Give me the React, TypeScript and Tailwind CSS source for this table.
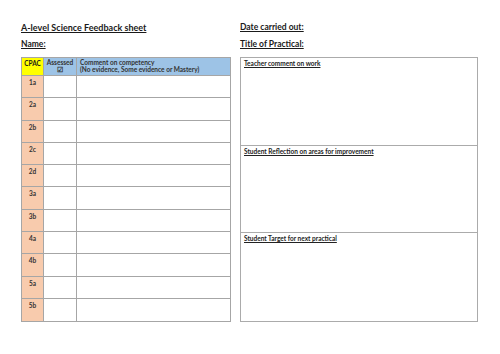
import React from "react"

const rows = ["1a", "2a", "2b", "2c", "2d", "3a", "3b", "4a", "4b", "5a", "5b"]

const sections = [
  "Teacher comment on work",
  "Student Reflection on areas for improvement",
  "Student Target for next practical",
]

export default function App() {
  return (
    <div
      className="w-[500px] h-[354px] bg-white text-[#1a1a1a] flex gap-[9px] pl-[21px] pt-[21px] leading-none"
      style={{ fontFamily: "Lato, 'Liberation Sans', sans-serif" }}
    >
      {/* left: competency table */}
      <div className="w-[210px] flex flex-col">
        <div className="h-[12px] flex items-center text-[9px] font-bold underline">
          A-level Science Feedback sheet
        </div>
        <div className="h-[12px] mt-[5px] flex items-center text-[8.5px] font-bold underline">
          Name:
        </div>
        <div className="mt-[7px] border border-[#a6a6a6]">
          <div className="flex h-[18px] border-b border-[#a6a6a6] text-[6.5px] font-bold leading-[7px]">
            <div className="w-[22px] bg-[#ffff00] border-r border-[#a6a6a6] flex justify-center pt-[2px]">CPAC</div>
            <div className="w-[33px] bg-[#9dc3e6] border-r border-[#a6a6a6] flex flex-col items-center pt-[1px] text-[#333]">
              <span>Assessed</span>
              <span className="text-[7px]">☑</span>
            </div>
            <div className="flex-1 bg-[#9dc3e6] flex flex-col pl-[3px] pt-[1px] text-[#333]">
              <span>Comment on competency</span>
              <span>(No evidence, Some evidence or Mastery)</span>
            </div>
          </div>
          {rows.map((r, i) => (
            <div
              key={r}
              className={`flex h-[22.3px] ${i < rows.length - 1 ? "border-b border-[#a6a6a6]" : ""}`}
            >
              <div className="w-[22px] bg-[#f8cbad] border-r border-[#a6a6a6] flex justify-center pt-[3px] text-[6.5px] font-bold leading-[7px] text-[#333]">
                {r}
              </div>
              <div className="w-[33px] border-r border-[#a6a6a6]" />
              <div className="flex-1" />
            </div>
          ))}
        </div>
      </div>

      {/* right: comment boxes */}
      <div className="w-[238px] flex flex-col">
        <div className="h-[12px] flex items-center text-[8.5px] font-bold underline">
          Date carried out:
        </div>
        <div className="h-[12px] mt-[5px] flex items-center text-[8.5px] font-bold underline">
          Title of Practical:
        </div>
        <div className="mt-[7px] border border-[#ababab] flex flex-col">
          {sections.map((s, i) => (
            <div
              key={s}
              className={`h-[87.7px] px-[3px] pt-[2px] text-[6.5px] font-bold underline leading-[8px] text-[#222] ${i < sections.length - 1 ? "border-b border-[#ababab]" : ""}`}
            >
              {s}
            </div>
          ))}
        </div>
      </div>
    </div>
  )
}
